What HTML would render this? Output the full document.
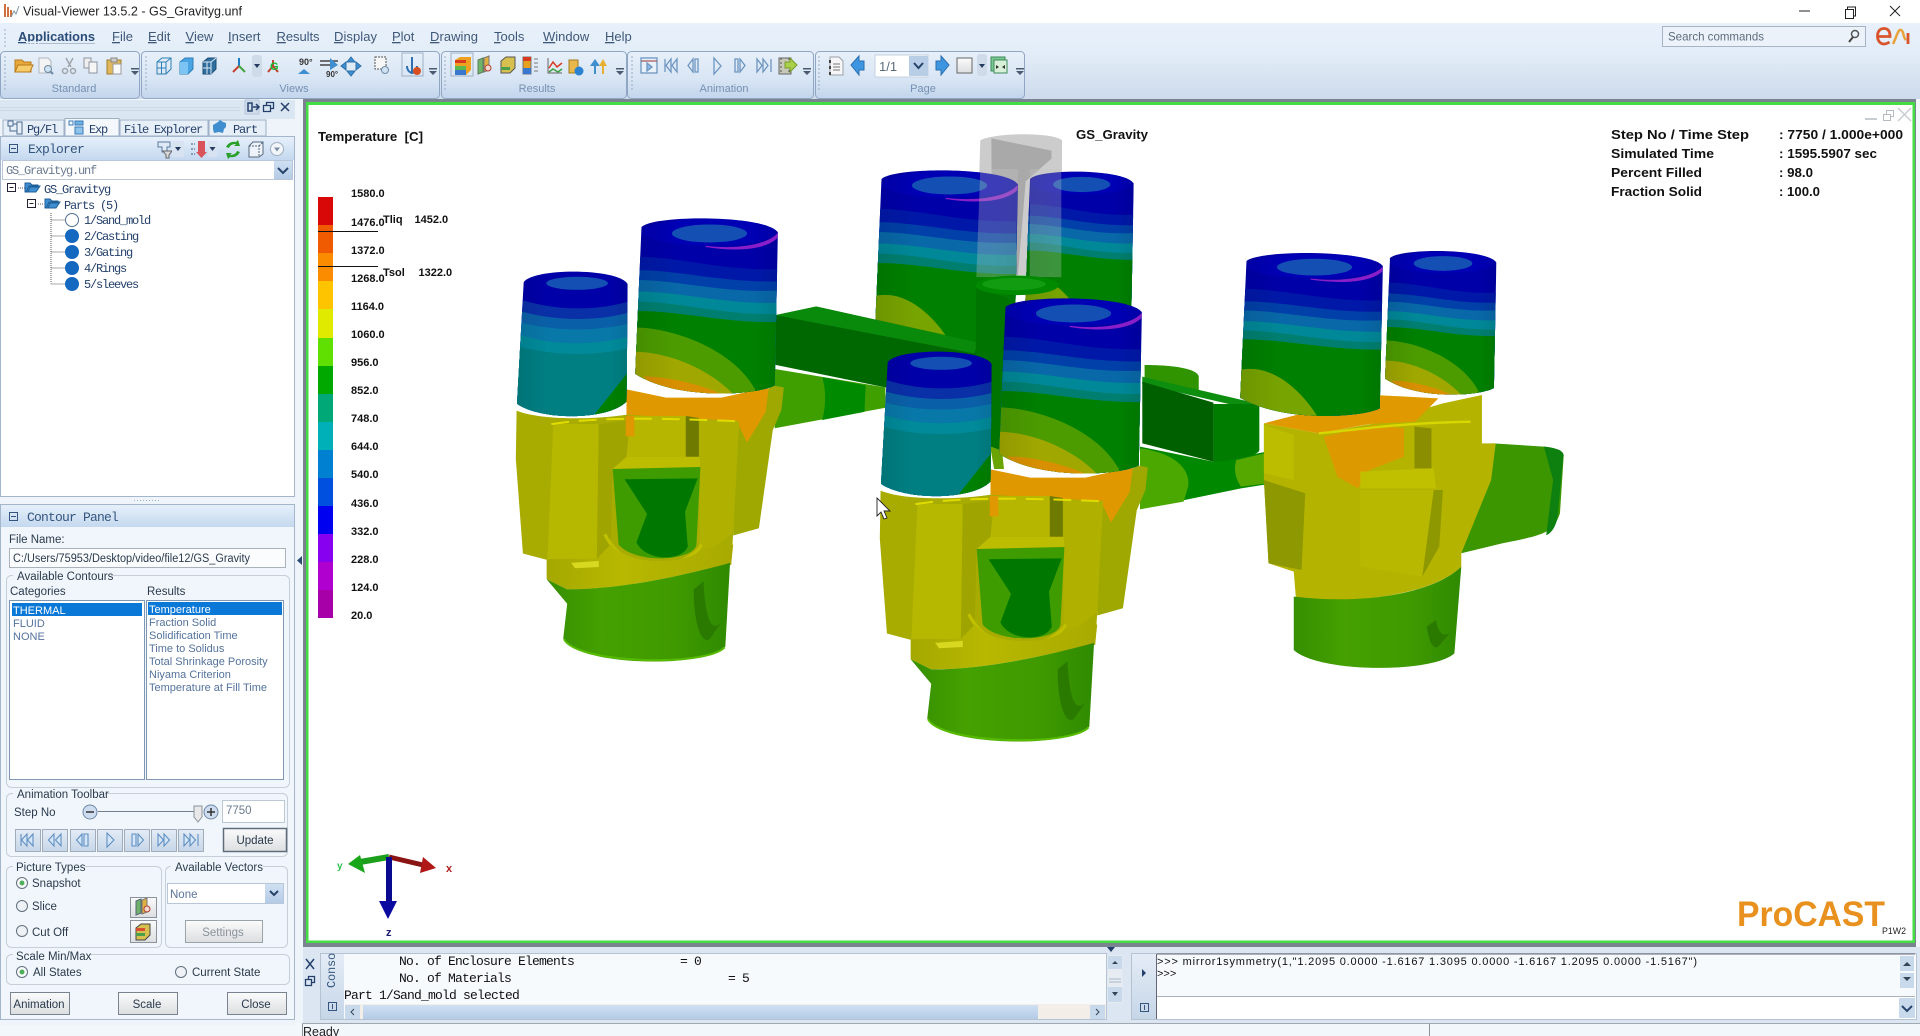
<!DOCTYPE html>
<html><head><meta charset="utf-8"><title>Visual-Viewer 13.5.2 - GS_Gravityg.unf</title>
<style>
html,body{margin:0;padding:0;background:#fff;width:1920px;height:1036px;overflow:hidden}
svg{display:block;position:absolute;left:0;top:0}
text{font-family:"Liberation Sans",sans-serif;white-space:pre}
.m{font-size:13px;fill:#3f5878}
.tl{font-size:11px;fill:#7590b2;text-anchor:middle}
.c{font-family:"Liberation Mono",monospace;font-size:12px;letter-spacing:-1.2px;fill:#24406a}
.h{font-family:"Liberation Mono",monospace;font-size:13px;letter-spacing:-.8px;fill:#34567e}
.con{font-family:"Liberation Mono",monospace;font-size:13px;letter-spacing:-.8px;fill:#111}
.u{font-size:11.5px;fill:#2a3a4c}
.li{font-size:11px;fill:#54739c}
.b{font-size:11px;font-weight:bold;fill:#111}
.o{font-size:12.5px;font-weight:bold;fill:#111}
</style></head><body>
<svg width="1920" height="1036" viewBox="0 0 1920 1036" xmlns="http://www.w3.org/2000/svg">
<defs>
<linearGradient id="bar" x1="0" y1="0" x2="0" y2="1"><stop offset="0" stop-color="#e8f1fb"/><stop offset=".4" stop-color="#e3edf8"/><stop offset="1" stop-color="#ccdaeb"/></linearGradient>
<linearGradient id="tp" x1="0" y1="0" x2="0" y2="1"><stop offset="0" stop-color="#e7f0fa"/><stop offset=".6" stop-color="#d8e5f4"/><stop offset="1" stop-color="#c2d5ec"/></linearGradient>
<linearGradient id="hd" x1="0" y1="0" x2="0" y2="1"><stop offset="0" stop-color="#e6f0fa"/><stop offset="1" stop-color="#c4d8ef"/></linearGradient>
<linearGradient id="btn" x1="0" y1="0" x2="0" y2="1"><stop offset="0" stop-color="#fbfbfb"/><stop offset="1" stop-color="#dcdee0"/></linearGradient>
<linearGradient id="ab" x1="0" y1="0" x2="0" y2="1"><stop offset="0" stop-color="#e4ecf6"/><stop offset="1" stop-color="#c6d6e8"/></linearGradient>
<linearGradient id="cb" x1="0" y1="0" x2="0" y2="1"><stop offset="0" stop-color="#cfe0f3"/><stop offset="1" stop-color="#b4cbe6"/></linearGradient>
<linearGradient id="cyl" x1="0" y1="0" x2="1" y2="0"><stop offset="0" stop-color="#000" stop-opacity=".1"/><stop offset=".3" stop-color="#000" stop-opacity="0"/><stop offset=".8" stop-color="#000" stop-opacity="0"/><stop offset="1" stop-color="#000" stop-opacity=".1"/></linearGradient>
<linearGradient id="grn" x1="0" y1="0" x2="1" y2="0"><stop offset="0" stop-color="#358f00"/><stop offset=".3" stop-color="#45a000"/><stop offset=".7" stop-color="#3f9a00"/><stop offset="1" stop-color="#2f8a00"/></linearGradient>
<linearGradient id="yel" x1="0" y1="0" x2="1" y2="0"><stop offset="0" stop-color="#a4a800"/><stop offset=".4" stop-color="#b8b800"/><stop offset="1" stop-color="#a8aa00"/></linearGradient>
<clipPath id="cL"><path d="M358,262C390,232 670,232 703,275L695,650C650,674 450,688 342,622Z"/></clipPath>
<clipPath id="cS"><path d="M60,397C85,362 300,362 323,402L320,690C270,738 100,735 43,695Z"/></clipPath>

<path id="PA" d="M520,308C600,318 680,305 703,276L701,290C670,318 600,323 520,311Z" fill="#8a1ec8"/>

<g id="RB">
<rect x="330" y="220" width="390" height="480" fill="#0000a8"/>
<ellipse cx="530" cy="275" rx="170" ry="32" fill="#0000b4"/>
<ellipse cx="530" cy="278" rx="95" ry="22" fill="#1450b4"/>
<path d="M330,335C450,332 560,372 710,365V700H330Z" fill="#0018a8"/>
<path d="M330,368C450,365 560,400 710,395V700H330Z" fill="#0040a8"/>
<path d="M330,392C450,390 560,425 710,418V700H330Z" fill="#0868a8"/>
<path d="M330,420C450,418 560,452 710,448V700H330Z" fill="#008898"/>
<path d="M330,445C450,442 560,480 710,475V700H330Z" fill="#007f70"/>
<path d="M330,468C450,465 560,498 710,495V700H330Z" fill="#008000"/>
</g>

<g id="RL"><g clip-path="url(#cL)">
<use href="#RB"/>
<path d="M330,508C430,505 590,560 645,660L650,700H330Z" fill="#4c9c00"/>
<path d="M330,568C420,565 530,610 590,672V700H330Z" fill="#a0a800"/>
<path d="M362,628C430,628 520,652 562,672L540,690L400,665Z" fill="#d89000"/>
<rect x="330" y="220" width="390" height="480" fill="url(#cyl)"/>
</g></g>

<g id="RL2"><g clip-path="url(#cL)">
<use href="#RB"/>
<path d="M340,549C420,530 500,600 548,690V700H340Z" fill="#78a400"/>
<rect x="330" y="220" width="390" height="480" fill="url(#cyl)"/>
</g></g>

<g id="RS"><g clip-path="url(#cS)">
<rect x="30" y="360" width="310" height="380" fill="#0000a8"/>
<ellipse cx="195" cy="400" rx="78" ry="16" fill="#1450b4"/>
<path d="M30,432C130,470 250,470 340,440V740H30Z" fill="#0a30a8"/>
<path d="M30,462C130,495 250,495 340,468V740H30Z" fill="#0a60a8"/>
<path d="M30,490C130,520 250,520 340,495V740H30Z" fill="#0878a8"/>
<path d="M30,520C130,555 250,555 340,525V740H30Z" fill="#008a9a"/>
<path d="M30,550C130,580 250,580 340,555V740H30Z" fill="#007f82"/>
<path d="M322,620L232,730H340V620Z" fill="#008000"/>
<rect x="30" y="360" width="310" height="380" fill="url(#cyl)"/>
</g></g>

<g id="U"><g transform="translate(500,120) scale(.3953,.4082)">
<path d="M600,720L690,650L718,655L712,710L690,760L655,1000L590,1018L590,760Z" fill="#9ea800"/>
<path d="M320,660L420,680L560,680L680,655L672,715L625,790L600,740L320,725Z" fill="#e09800"/>
<path d="M42,712C100,735 230,735 320,722L605,738L590,1010L585,1090L120,1078L58,1062L40,830Z" fill="#a8ac00"/>
<path d="M135,745L250,745L245,1075L120,1075Z" fill="#b6b800"/>
<path d="M250,745L330,735L320,830L285,855L280,1040L245,1075Z" fill="#a0a400"/>
<path d="M505,735L605,738L590,1010L505,1075Z" fill="#b0b000"/>
<path d="M330,725L470,725L470,825L320,825Z" fill="#b6b600"/>
<path d="M470,725L503,730L503,835L470,825Z" fill="#6f7a00"/>
<rect x="318" y="725" width="22" height="50" fill="#e09800"/>
<path d="M130,745C200,735 300,725 600,738" fill="none" stroke="#e0dc00" stroke-width="5" stroke-dasharray="45 25"/>
<path d="M320,825L505,825L507,850L285,855Z" fill="#bcbc00"/>
<path d="M285,855L507,850L497,1040C490,1082 340,1088 300,1040Z" fill="#3f9c00"/>
<path d="M315,880L500,878L468,960L475,1045C460,1082 370,1082 345,1035L372,965Z" fill="#007800"/>
<path d="M265,1015C290,1060 320,1085 400,1090C460,1090 500,1060 510,1040" fill="none" stroke="#c0c000" stroke-width="8"/>
<path d="M118,1078L118,1125L170,1150C300,1150 450,1120 585,1085L590,1040L510,1050C480,1090 330,1095 280,1040L245,1075Z" fill="url(#yel)"/>
<path d="M180,1085L250,1080L250,1095L190,1098Z" fill="#d8d820"/>
<path d="M118,1125L170,1185L160,1270C190,1338 520,1345 570,1290L582,1085C450,1120 300,1150 170,1150Z" fill="url(#grn)"/>
<path d="M490,1150C490,1220 505,1285 530,1272L560,1232C540,1250 520,1240 515,1130Z" fill="#2a7a00"/>
<path d="M162,1272C195,1332 520,1340 568,1292" fill="none" stroke="#56bb00" stroke-width="5"/>
</g>
<g transform="translate(500,120) scale(.3953,.4082)"><use href="#RL"/><use href="#PA"/><use href="#RS"/></g></g>
</defs>

<rect width="1920" height="1036" fill="#f2f7fb"/>
<rect width="1920" height="23" fill="#fff"/>
<rect y="23" width="1920" height="76" fill="url(#bar)"/>

<!-- title bar -->
<path d="M5,4V17M8,7V17M11,10V17" stroke="#d0703c" stroke-width="2"/><path d="M11,17L14,11L16,14L19,6" fill="none" stroke="#7e96aa"/>
<text x="23" y="15.500" font-size="13" fill="#222" textLength="219" lengthAdjust="spacingAndGlyphs">Visual-Viewer 13.5.2 - GS_Gravityg.unf</text>
<path d="M1799,11H1810" stroke="#222"/>
<path d="M1845.500,9.500h8v9h-8zM1847.500,9.500v-2.500h8v9h-2" fill="none" stroke="#222"/>
<path d="M1890,6L1900,16M1900,6L1890,16" stroke="#222"/>

<!-- menu -->
<path d="M5,29v18" stroke="#9fb0c4" stroke-dasharray="2 2"/>
<text x="18" y="41" font-size="13" font-weight="bold" fill="#2b4c78" textLength="77" lengthAdjust="spacingAndGlyphs" text-decoration="underline">Applications</text>
<rect x="26" y="41.500" width="69" height="1.500" fill="#e4edf8"/>
<text class="m" x="112" y="41"><tspan text-decoration="underline">F</tspan>ile</text>
<text class="m" x="148" y="41"><tspan text-decoration="underline">E</tspan>dit</text>
<text class="m" x="185.500" y="41"><tspan text-decoration="underline">V</tspan>iew</text>
<text class="m" x="228" y="41"><tspan text-decoration="underline">I</tspan>nsert</text>
<text class="m" x="276.500" y="41" textLength="43"><tspan text-decoration="underline">R</tspan>esults</text>
<text class="m" x="334" y="41" textLength="43"><tspan text-decoration="underline">D</tspan>isplay</text>
<text class="m" x="392" y="41"><tspan text-decoration="underline">P</tspan>lot</text>
<text class="m" x="430" y="41" textLength="48"><tspan text-decoration="underline">D</tspan>rawing</text>
<text class="m" x="494" y="41"><tspan text-decoration="underline">T</tspan>ools</text>
<text class="m" x="543" y="41"><tspan text-decoration="underline">W</tspan>indow</text>
<text class="m" x="605" y="41"><tspan text-decoration="underline">H</tspan>elp</text>
<!-- search -->
<rect x="1662.500" y="26.500" width="203" height="20" fill="#ecf2f9" stroke="#a7b3c2"/>
<text x="1668" y="40.500" font-size="12" fill="#5d6c7e" textLength="96" lengthAdjust="spacingAndGlyphs">Search commands</text>
<circle cx="1855" cy="34" r="3.500" fill="none" stroke="#555" stroke-width="1.500"/><path d="M1853,37L1849,42" stroke="#444" stroke-width="2"/>
<path d="M1878,36.500h12c0,-6 -2.500,-8 -6,-8c-4,0 -6.500,3 -6.500,7.500c0,5 3,8 6.500,8c2.500,0 4,-1 5.500,-2" fill="none" stroke="#d9542c" stroke-width="2.800"/>
<path d="M1893,44C1897,36 1898,29 1901,30C1904,31 1903,38 1906,40" fill="none" stroke="#e8a23c" stroke-width="2.500"/>
<path d="M1908,33V44" stroke="#d9542c" stroke-width="2.800"/>

<!-- toolbar panels -->
<g fill="url(#tp)" stroke="#90a6c2">
<rect x=".5" y="51.500" width="139" height="47" rx="4"/>
<rect x="141.500" y="51.500" width="298" height="47" rx="4"/>
<rect x="441.500" y="51.500" width="185" height="47" rx="4"/>
<rect x="627.500" y="51.500" width="186" height="47" rx="4"/>
<rect x="815.500" y="51.500" width="209" height="47" rx="4"/>
</g>
<g stroke="#9cadc2" stroke-dasharray="2 2">
<path d="M5,56V92M146,56V92M445,56V92M632,56V92M819,56V92"/></g>
<text class="tl" x="74" y="92">Standard</text><text class="tl" x="294" y="92">Views</text><text class="tl" x="537" y="92">Results</text><text class="tl" x="724" y="92">Animation</text><text class="tl" x="923" y="92">Page</text>
<g fill="#4a5a70"><path d="M131,68h8v1.500h-8zM131,71h8l-4,4z"/><path d="M429,68h8v1.500h-8zM429,71h8l-4,4z"/><path d="M616,68h8v1.500h-8zM616,71h8l-4,4z"/><path d="M803,68h8v1.500h-8zM803,71h8l-4,4z"/><path d="M1016,68h8v1.500h-8zM1016,71h8l-4,4z"/></g>
<!-- standard icons -->
<path d="M15,60h7l2,2h7v10H15z" fill="#e8a83c" stroke="#b97a1c"/><path d="M15,72l3,-7h15l-3,7z" fill="#f6cb6a" stroke="#b97a1c"/>
<path d="M39,58h9l3,3v12H39z" fill="#f3f3f3" stroke="#b0b8c0"/><circle cx="48" cy="69" r="3.500" fill="#cfe2f2" stroke="#6f8ba6"/><path d="M50,71l3,3" stroke="#6f8ba6" stroke-width="2"/>
<path d="M66,58l5,9M73,58l-5,9" stroke="#a0a4aa" stroke-width="1.500"/><circle cx="65" cy="71" r="2.500" fill="none" stroke="#a0a4aa" stroke-width="1.500"/><circle cx="73" cy="71" r="2.500" fill="none" stroke="#a0a4aa" stroke-width="1.500"/>
<path d="M84,58h7v10h-7z" fill="#eee" stroke="#8d959e"/><path d="M89,62h8v11h-8z" fill="#f6f6f6" stroke="#8d959e"/>
<path d="M107,60h14v14h-14z" fill="#e2b85c" stroke="#9f7e2e"/><rect x="111" y="58" width="6" height="4" fill="#ccc" stroke="#888"/><path d="M113,64h8v10h-8z" fill="#fafafa" stroke="#9a9a9a"/>
<!-- views icons -->
<g fill="none" stroke="#2d7fb5"><path d="M157,62l5,-4h9v11l-5,5h-9zM157,62h9v12M166,62l5,-4M161.500,62v12M157,68h9"/></g>
<path d="M180,62l5,-4h8v11l-5,5h-8z" fill="#4aa3e2" stroke="#2d7fb5"/><path d="M180,62h8v12h-8z" fill="#7cc4f4"/>
<g fill="#2f6f9f" stroke="#1d4d74"><path d="M203,62l5,-4h8v11l-5,5h-8z"/></g><path d="M203,62h8v12M207,62v12M203,68h8M211,62l5,-4" fill="none" stroke="#dfeaf4"/>
<path d="M239,66V58" stroke="#1f7ac4" stroke-width="2"/><path d="M239,66l-6,6" stroke="#c64030" stroke-width="2"/><path d="M239,66l6,6" stroke="#43a43d" stroke-width="2"/>
<rect x="252" y="55" width="10" height="22" rx="3" fill="#cfdbe8"/><path d="M254,64h6l-3,4z" fill="#223a5e"/>
<path d="M273,66V60M273,66l-5,6M273,66l5,6" stroke="#c64030" stroke-width="2"/><text x="270" y="70" font-size="11" font-weight="bold" fill="#1b3" >G</text>
<text x="299" y="65" font-size="9" font-weight="bold" fill="#333">90°</text><path d="M298,74l6,-5l6,5z" fill="#3f8fd0"/>
<path d="M320,61h18M320,65h14" stroke="#444" stroke-width="1.500"/><path d="M330,58l8,7l-8,5z" fill="#3f8fd0"/><text x="326" y="77" font-size="8" font-weight="bold" fill="#333">90°</text>
<path d="M351,57l4,5h-8zM351,76l4,-5h-8zM341,66l5,-4v8zM361,66l-5,-4v8z" fill="#3f8fd0" stroke="#2a6fa8"/>
<rect x="375" y="57" width="11" height="12" fill="#f6f6f6" stroke="#555" stroke-dasharray="2 1"/><circle cx="385" cy="70" r="3.500" fill="#cfe2f2" stroke="#6f8ba6"/>
<rect x="402" y="53" width="21" height="23" fill="none" stroke="#a0b0c4"/>
<path d="M412,57v16M407,66c0,6 5,7 5,7s5,-1 5,-7" fill="none" stroke="#2d6fb0" stroke-width="2"/><circle cx="417" cy="71" r="4" fill="#d8501f"/>
<!-- results icons -->
<rect x="451" y="53" width="22" height="23" fill="none" stroke="#a0b0c4"/>
<path d="M455,60l5,-3h11v13l-5,5h-11z" fill="#f0a020"/><path d="M455,66h11v4h-11z" fill="#5ab84c"/><path d="M455,70h11v5h-11z" fill="#3a78d0"/><path d="M455,60h11v3h-11z" fill="#d83a20"/>
<path d="M478,60l5,-2v14l-5,2z" fill="#6fb26a" stroke="#5e7e5e"/><path d="M484,58l5,-2v14l-5,2z" fill="#e0b040" stroke="#777"/><circle cx="488" cy="68" r="3" fill="#f6d8d0" stroke="#b04030"/>
<path d="M501,61l5,-4h9v11l-5,5h-9z" fill="#d8c050" stroke="#555"/><path d="M501,67h9v3h-9z" fill="#4aa04a"/>
<rect x="523" y="57" width="8" height="17" fill="#e8a020" stroke="#777"/><rect x="523" y="57" width="8" height="4" fill="#d83a20"/><rect x="523" y="68" width="8" height="6" fill="#3a78d0"/><path d="M534,59h4M534,63h4M534,67h4M534,71h4" stroke="#777"/>
<path d="M548,58v15h14" fill="none" stroke="#666"/><path d="M549,68l4,-6l4,5l5,-4" fill="none" stroke="#d83a20" stroke-width="1.500"/><path d="M549,72l4,-3l5,3l4,-3" fill="none" stroke="#3fa040" stroke-width="1.500"/>
<path d="M569,60h9v13h-9z" fill="#e8b84c" stroke="#a07c20"/><circle cx="579" cy="71" r="4.500" fill="#2a82d0"/>
<path d="M594,74v-8l-4,0l5,-7l5,7h-4v8z" fill="#3f8fd0"/><path d="M602,74v-8h-3l4,-7l4,7h-3v8z" fill="#e8b030"/>
<!-- animation icons -->
<g fill="none" stroke="#6d95c0" stroke-width="1.300">
<rect x="641" y="58" width="16" height="15" fill="#e8f1fa"/><path d="M641,61h16" stroke="#a86060"/><path d="M647,63l5,4l-5,4z" fill="#8fbbe8"/>
<path d="M665,59v13M677,59l-5,6.500l5,6.500zM671,59l-5,6.500l5,6.500z"/>
<path d="M693,59l-5,6.500l5,6.500zM695,59v13h3v-13z"/>
<path d="M714,58l7,8l-7,8z"/>
<path d="M735,59h3v13h-3zM740,59l5,6.500l-5,6.500z"/>
<path d="M757,59l5,6.500l-5,6.500zM763,59l5,6.500l-5,6.500zM771,59v13"/>
</g>
<rect x="779" y="58" width="12" height="16" fill="#c8c8b8" stroke="#666"/><path d="M781,58v16M789,58v16" stroke="#555" stroke-dasharray="2 2"/><path d="M785,62h5v-4l7,7l-7,7v-4h-5z" fill="#a8d048" stroke="#7a9a30"/>
<!-- page icons -->
<path d="M830,57h9l4,4v14h-13z" fill="#f6f6f6" stroke="#9aa2aa"/><path d="M833,64h7M833,67h7M833,70h7" stroke="#777"/><path d="M830,60v3M830,66v3M830,72v3" stroke="#444" stroke-width="2"/>
<path d="M851,65l8,-9v5h5v9h-5v5z" fill="#3f96e0" stroke="#2a6fb0"/>
<rect x="875" y="55" width="53" height="22" fill="#fff" stroke="#c5d2e2"/><rect x="909" y="56" width="19" height="20" fill="#b8cde6"/>
<text x="879" y="71" font-size="13" fill="#5a6a80">1/1</text><path d="M914,63l4.500,5l4.500,-5" fill="none" stroke="#27436b" stroke-width="2"/>
<path d="M949,65l-8,-9v5h-5v9h5v5z" fill="#3f96e0" stroke="#2a6fb0"/>
<rect x="957" y="58" width="15" height="15" fill="url(#btn)" stroke="#666"/>
<rect x="977" y="54" width="10" height="22" rx="3" fill="#cfdbe8"/><path d="M979,64h6l-3,4z" fill="#223a5e"/>
<rect x="991" y="57" width="14" height="14" fill="#7ac890" stroke="#3c8a5c"/><rect x="994" y="60" width="13" height="13" fill="#d8f0d8" stroke="#3c8a5c"/><path d="M996,65l3,2l-3,2zM1005,65l-3,2l3,2z" fill="#333"/>

<!-- left panel -->
<rect x="0" y="100" width="303" height="925" fill="#eff4fb"/>
<rect x="0" y="100" width="295" height="19" fill="#dbe6f3"/>
<path d="M0,107.500H240M0,110.500H240" stroke="#ccd8e6"/>
<rect x="245" y="100" width="14" height="14" fill="#cfdcec" stroke="#b4c4d8"/><path d="M248,103v8h4v-8zM253,107h5m-2,-3l3,3l-3,3" fill="none" stroke="#24406a" stroke-width="1.500"/>
<path d="M263.500,105.500h7v6h-7zM266.500,105.500v-3h7v6h-3" fill="none" stroke="#24406a" stroke-width="1.300"/>
<path d="M281,103L289,111M289,103L281,111" stroke="#24406a" stroke-width="1.500"/>
<!-- tabs -->
<path d="M3,136V120h61v16z" fill="#e6eef8" stroke="#9eb0c6"/>
<path d="M65,136V118.500h54V136z" fill="#f4f8fd" stroke="#9eb0c6"/>
<path d="M120,136V120h88v16z" fill="#e6eef8" stroke="#9eb0c6"/>
<path d="M209,136V120h57v16z" fill="#e6eef8" stroke="#9eb0c6"/>
<g fill="none" stroke="#4a6a90"><rect x="8" y="121" width="5" height="5"/><rect x="17" y="122" width="5" height="12"/><path d="M13,124h4M10,126v5h7"/></g>
<g fill="none" stroke="#3a7ab8"><rect x="69" y="121" width="4" height="4"/><rect x="75" y="121" width="8" height="4" fill="#6fb0e0"/><rect x="75" y="127" width="8" height="7" fill="#8fc4ec"/></g>
<path d="M213,125l5,-3l2,-2l3,2l3,1l0,4l-2,2l-1,4l-4,-1l-5,1l-1,-4z" fill="#3f8fd0"/>
<text class="c" x="27" y="133">Pg/Fl</text><text class="c" x="89" y="133">Exp</text><text class="c" x="124" y="133">File Explorer</text><text class="c" x="233" y="133">Part</text>
<!-- explorer panel -->
<rect x=".5" y="136.500" width="294" height="360" fill="#fff" stroke="#a4b6cc"/>
<rect x="1" y="137" width="293" height="23" fill="url(#hd)"/>
<rect x="9.500" y="144.500" width="8" height="8" fill="none" stroke="#34567e"/><path d="M11,148.500h5" stroke="#34567e"/>
<text class="h" x="28" y="153">Explorer</text>
<path d="M158,142h12v5h-3v5h-5v-5h-4z" fill="#e0eaf6" stroke="#5a7a9e"/><path d="M163,151h9l-3,4v3h-3v-3z" fill="#d8d8d8" stroke="#666"/>
<rect x="172" y="141" width="12" height="16" fill="#d7e3f1"/><path d="M175,147h6l-3,4z" fill="#223a5e"/>
<path d="M191,144h4M191,149h4M191,154h4" stroke="#3a5a80" stroke-dasharray="2 1"/><rect x="198" y="141" width="7" height="12" fill="#d8545a"/><path d="M196,152h11l-5.500,6z" fill="#d8545a"/>
<rect x="208" y="141" width="9" height="16" fill="#d7e3f1"/><path d="M209.500,147h6l-3,4z" fill="#223a5e"/>
<path d="M226,147c2,-4 6,-6 10,-5l2,-2l2,6h-6l2,-2c-3,0 -6,1 -7,4z" fill="#2aa02a"/><path d="M240,152c-2,4 -6,6 -10,5l-2,2l-2,-6h6l-2,2c3,0 6,-1 7,-4z" fill="#2aa02a"/>
<path d="M249,146l4,-4h10v12l-4,3h-10z" fill="#eef3f9" stroke="#56687e"/><path d="M249,146h10v11M259,146l4,-4" fill="none" stroke="#56687e" stroke-dasharray="2 1"/>
<circle cx="277" cy="149" r="6.500" fill="#f2f6fb" stroke="#a0b0c2"/><path d="M274,147.500h6l-3,4z" fill="#7a8ea6"/>
<rect x="2.500" y="160.500" width="290" height="19" fill="#fff" stroke="#b8c6d8"/>
<text class="c" x="6" y="174" style="fill:#6a7a90">GS_Gravityg.unf</text>
<rect x="274" y="161" width="18" height="18" fill="url(#cb)"/><path d="M278,168l5,5l5,-5" fill="none" stroke="#27436b" stroke-width="2"/>
<!-- tree -->
<g stroke="#555" stroke-dasharray="1 1"><path d="M18,188H25M38,204H44M51,213V283.500M51.500,220H65M51.500,236H65M51.500,252H65M51.500,268H65M51.500,284H65"/></g>
<g fill="#fff" stroke="#223"><rect x="7.500" y="183.500" width="8" height="8"/><rect x="27.500" y="199.500" width="8" height="8"/></g>
<path d="M9.500,187.500h4M29.500,203.500h4" stroke="#223"/>
<g fill="#3f8fd0" stroke="#1f5f98"><path d="M25,192v-9h5l2,2h6v2h-8l-2,5zM26,192l3,-6h11l-4,6z"/><path d="M45,208v-9h5l2,2h6v2h-8l-2,5zM46,208l3,-6h11l-4,6z"/></g>
<text class="c" x="44" y="193">GS_Gravityg</text>
<text class="c" x="64" y="209">Parts (5)</text>
<circle cx="72" cy="220" r="6.500" fill="#fff" stroke="#52708e"/>
<g fill="#1468c0"><circle cx="72" cy="236" r="7"/><circle cx="72" cy="252" r="7"/><circle cx="72" cy="268" r="7"/><circle cx="72" cy="284" r="7"/></g>
<text class="c" x="84" y="224">1/Sand_mold</text><text class="c" x="84" y="240">2/Casting</text><text class="c" x="84" y="256">3/Gating</text><text class="c" x="84" y="272">4/Rings</text><text class="c" x="84" y="288">5/sleeves</text>
<path d="M134,500.500h26" stroke="#a4b4c8" stroke-dasharray="1 2"/>
<!-- contour panel -->
<rect x=".5" y="504.500" width="294" height="515" fill="#f1f6fc" stroke="#a4b6cc"/>
<rect x="1" y="505" width="293" height="22" fill="url(#hd)"/>
<rect x="9.500" y="512.500" width="8" height="8" fill="none" stroke="#34567e"/><path d="M11,516.500h5" stroke="#34567e"/>
<text class="h" x="27" y="521">Contour Panel</text>
<path d="M302,556v9l-5,-4.500z" fill="#2a4a72"/>
<text class="u" x="9" y="543">File Name:</text>
<rect x="9.500" y="548.500" width="276" height="19" fill="#fafcfe" stroke="#aab2bc"/>
<text x="13" y="562" font-size="11.500" fill="#2a3a4c" textLength="237" lengthAdjust="spacingAndGlyphs">C:/Users/75953/Desktop/video/file12/GS_Gravity</text>
<g fill="none" stroke="#c6ced8">
<rect x="6.500" y="575.500" width="283" height="212" rx="5"/>
<rect x="6.500" y="793.500" width="281" height="63" rx="5"/>
<rect x="6.500" y="866.500" width="155" height="81" rx="5"/>
<rect x="165.500" y="866.500" width="122" height="81" rx="5"/>
<rect x="6.500" y="954.500" width="283" height="30" rx="5"/></g>
<g fill="#f1f6fc"><rect x="13" y="570" width="98" height="10"/><rect x="13" y="788" width="92" height="10"/><rect x="13" y="861" width="72" height="10"/><rect x="171" y="861" width="92" height="10"/><rect x="13" y="949" width="77" height="10"/></g>
<text class="u" x="17" y="580">Available Contours</text>
<text class="u" x="10" y="595">Categories</text><text class="u" x="147" y="595">Results</text>
<rect x="9.500" y="600.500" width="135" height="179" fill="#fff" stroke="#7e98b4"/>
<rect x="146.500" y="600.500" width="137" height="179" fill="#fff" stroke="#7e98b4"/>
<rect x="12" y="603" width="130" height="13" fill="#0a78d7"/><rect x="148" y="602" width="134" height="13" fill="#0a78d7"/>
<text class="li" x="13" y="614" style="fill:#fff">THERMAL</text><text class="li" x="13" y="627">FLUID</text><text class="li" x="13" y="640">NONE</text>
<text class="li" x="149" y="613" style="fill:#fff">Temperature</text><text class="li" x="149" y="626">Fraction Solid</text><text class="li" x="149" y="639">Solidification Time</text><text class="li" x="149" y="652">Time to Solidus</text><text class="li" x="149" y="665">Total Shrinkage Porosity</text><text class="li" x="149" y="678">Niyama Criterion</text><text class="li" x="149" y="691">Temperature at Fill Time</text>
<!-- animation toolbar -->
<text class="u" x="17" y="798">Animation Toolbar</text>
<text class="u" x="14" y="816">Step No</text>
<circle cx="90" cy="812" r="7" fill="#cddcef" stroke="#6f88a6"/><path d="M86,812h8" stroke="#333" stroke-width="1.500"/>
<path d="M98,811.500H196" stroke="#76808c"/><path d="M194,806h8v11l-4,5l-4,-5z" fill="#e8e8e8" stroke="#8a929c"/>
<circle cx="211" cy="812" r="7" fill="#cddcef" stroke="#6f88a6"/><path d="M207,812h8M211,808v8" stroke="#333" stroke-width="1.500"/>
<rect x="222.500" y="800.500" width="62" height="22" fill="#fff" stroke="#bcc8d4"/>
<text x="226" y="814" font-size="11.500" fill="#6a7a8e">7750</text>
<g fill="url(#ab)" stroke="#a0acba"><rect x="15.500" y="829.500" width="25" height="22"/><rect x="42.500" y="829.500" width="25" height="22"/><rect x="70.500" y="829.500" width="25" height="22"/><rect x="97.500" y="829.500" width="25" height="22"/><rect x="124.500" y="829.500" width="25" height="22"/><rect x="151.500" y="829.500" width="25" height="22"/><rect x="178.500" y="829.500" width="25" height="22"/></g>
<g fill="#d5e6f8" stroke="#5f8fc2" stroke-width="1.100">
<path d="M21,834v12M33,834l-5.500,6l5.500,6zM27,834l-5.500,6l5.500,6z"/>
<path d="M54,834l-5.500,6l5.500,6zM61,834l-5.500,6l5.500,6z"/>
<path d="M82,834l-5.500,6l5.500,6zM84,834v12h4v-12z"/>
<path d="M107,833l7,7l-7,7z"/>
<path d="M132,834v12h4v-12zM138,834l5.500,6l-5.500,6z"/>
<path d="M158,834l5.500,6l-5.500,6zM164,834l5.500,6l-5.500,6z"/>
<path d="M184,834l5.500,6l-5.500,6zM190,834l5.500,6l-5.500,6zM198,834v12"/></g>
<rect x="223.500" y="828.500" width="63" height="23" fill="url(#btn)" stroke="#5e6c7c" stroke-width="1.500"/>
<text class="u" x="255" y="844" text-anchor="middle">Update</text>
<!-- picture types -->
<text class="u" x="16" y="871">Picture Types</text>
<text class="u" x="175" y="871">Available Vectors</text>
<circle cx="22" cy="883" r="5.500" fill="#f8fafc" stroke="#62707e"/><circle cx="22" cy="883" r="2.500" fill="#4fae5a"/>
<circle cx="22" cy="906" r="5.500" fill="#eef2f6" stroke="#62707e"/><circle cx="22" cy="931" r="5.500" fill="#eef2f6" stroke="#62707e"/>
<text class="u" x="32" y="887">Snapshot</text><text class="u" x="32" y="910">Slice</text><text class="u" x="32" y="936">Cut Off</text>
<rect x="130.500" y="897.500" width="26" height="20" fill="url(#btn)" stroke="#8a929c"/><rect x="130.500" y="920.500" width="26" height="22" fill="url(#btn)" stroke="#8a929c"/>
<path d="M136,901l5,-2v14l-5,2z" fill="#6fb26a" stroke="#567"/><path d="M142,900l5,-2v14l-5,2z" fill="#e0b040" stroke="#777"/><circle cx="147" cy="909" r="3" fill="#f6d8d0" stroke="#b04030"/>
<path d="M136,928l5,-4h9v11l-5,5h-9z" fill="#d8c050" stroke="#444"/><path d="M136,933h9v3h-9z" fill="#4aa04a"/><path d="M136,928h9v3h-9z" fill="#d85030"/>
<rect x="167.500" y="883.500" width="116" height="20" fill="#fff" stroke="#b8c6d8"/>
<text x="170" y="898" font-size="11.500" fill="#5a7498">None</text>
<rect x="265" y="884" width="18" height="19" fill="url(#cb)"/><path d="M270,891l4,4l4,-4" fill="none" stroke="#27436b" stroke-width="2"/>
<rect x="185.500" y="920.500" width="77" height="22" fill="url(#btn)" stroke="#9aa2aa"/><text class="u" x="223" y="936" text-anchor="middle" style="fill:#8a929c">Settings</text>
<text class="u" x="16" y="960">Scale Min/Max</text>
<circle cx="22" cy="972" r="5.500" fill="#f8fafc" stroke="#62707e"/><circle cx="22" cy="972" r="2.500" fill="#4fae5a"/>
<circle cx="181" cy="972" r="5.500" fill="#eef2f6" stroke="#62707e"/>
<text class="u" x="33" y="976">All States</text><text class="u" x="192" y="976">Current State</text>
<g fill="url(#btn)" stroke="#7a8490"><rect x="10.500" y="992.500" width="59" height="22"/><rect x="118.500" y="992.500" width="59" height="22"/><rect x="227.500" y="992.500" width="59" height="22"/></g>
<text class="u" x="39" y="1008" text-anchor="middle">Animation</text><text class="u" x="147" y="1008" text-anchor="middle">Scale</text><text class="u" x="256" y="1008" text-anchor="middle">Close</text>

<!-- viewport -->
<rect x="303" y="99" width="1613" height="848" fill="#7a8490"/>
<rect x="306" y="102" width="1609" height="841" fill="#44dd44"/>
<rect x="308.500" y="105" width="1604" height="835.500" fill="#fff"/>
<rect x="1865" y="118" width="12" height="2" fill="#c8cdd2"/><path d="M1883.500,114.500h7v6h-7zM1886.500,114.500v-4h7v6h-3" fill="none" stroke="#b4bbc2"/><path d="M1898,108L1911,121M1911,108L1898,121" stroke="#c8cdd2" stroke-width="1.500"/>

<text x="318" y="141" font-size="13" font-weight="bold" fill="#111" textLength="105" lengthAdjust="spacingAndGlyphs">Temperature  [C]</text>
<text x="1076" y="139" font-size="13" font-weight="bold" fill="#111" textLength="72" lengthAdjust="spacingAndGlyphs">GS_Gravity</text>
<text class="o" x="1611" y="139" textLength="138" lengthAdjust="spacingAndGlyphs">Step No / Time Step</text><text class="o" x="1779" y="139" textLength="124" lengthAdjust="spacingAndGlyphs">: 7750 / 1.000e+000</text>
<text class="o" x="1611" y="158" textLength="103" lengthAdjust="spacingAndGlyphs">Simulated Time</text><text class="o" x="1779" y="158" textLength="98" lengthAdjust="spacingAndGlyphs">: 1595.5907 sec</text>
<text class="o" x="1611" y="177" textLength="91" lengthAdjust="spacingAndGlyphs">Percent Filled</text><text class="o" x="1779" y="177" textLength="34" lengthAdjust="spacingAndGlyphs">: 98.0</text>
<text class="o" x="1611" y="196" textLength="91" lengthAdjust="spacingAndGlyphs">Fraction Solid</text><text class="o" x="1779" y="196" textLength="41" lengthAdjust="spacingAndGlyphs">: 100.0</text>

<!-- legend -->
<g>
<rect x="318" y="197" width="15" height="28" fill="#d90808"/><rect x="318" y="225" width="15" height="28" fill="#f05a00"/><rect x="318" y="253" width="15" height="28" fill="#fb8c00"/><rect x="318" y="281" width="15" height="28" fill="#ffc400"/><rect x="318" y="309" width="15" height="29" fill="#e0ea00"/><rect x="318" y="338" width="15" height="28" fill="#5fe000"/><rect x="318" y="366" width="15" height="28" fill="#00a800"/><rect x="318" y="394" width="15" height="28" fill="#00a878"/><rect x="318" y="422" width="15" height="28" fill="#00b0b8"/><rect x="318" y="450" width="15" height="28" fill="#0080d0"/><rect x="318" y="478" width="15" height="28" fill="#0050e0"/><rect x="318" y="506" width="15" height="28" fill="#0000f0"/><rect x="318" y="534" width="15" height="28" fill="#8800f0"/><rect x="318" y="562" width="15" height="28" fill="#b000d0"/><rect x="318" y="590" width="15" height="28" fill="#a800a8"/>
</g>
<path d="M318,231.500H378M318,266.500H378" stroke="#111"/>
<g class="b"><text class="b" x="351" y="197">1580.0</text><text class="b" x="351" y="226">1476.0</text><text class="b" x="351" y="254">1372.0</text><text class="b" x="351" y="282">1268.0</text><text class="b" x="351" y="310">1164.0</text><text class="b" x="351" y="338">1060.0</text><text class="b" x="351" y="366">956.0</text><text class="b" x="351" y="394">852.0</text><text class="b" x="351" y="422">748.0</text><text class="b" x="351" y="450">644.0</text><text class="b" x="351" y="478">540.0</text><text class="b" x="351" y="507">436.0</text><text class="b" x="351" y="535">332.0</text><text class="b" x="351" y="563">228.0</text><text class="b" x="351" y="591">124.0</text><text class="b" x="351" y="619">20.0</text>
<text class="b" x="383" y="223">Tliq</text><text class="b" x="414.500" y="223">1452.0</text><text class="b" x="383" y="276">Tsol</text><text class="b" x="418.500" y="276">1322.0</text></g>

<!-- 3D model -->
<g transform="translate(500,120) scale(.3953,.4082)">
<path d="M1215,50C1250,30 1400,30 1422,50L1420,380H1205Z" fill="#cccccc"/>
<path d="M1243,45L1395,75V95L1330,150L1310,380H1245Z" fill="#a9a9a9"/>
</g>
<g transform="translate(240,-48)"><g transform="translate(500,120) scale(.3953,.4082)"><use href="#RL2"/><use href="#PA"/></g></g>
<g transform="translate(542.500,-14) scale(.76,.85)"><g transform="translate(500,120) scale(.3953,.4082)"><use href="#RL2"/></g></g>
<g transform="translate(500,120) scale(.3953,.4082)">
<path d="M1215,120L1205,385H1305L1310,120Z" fill="#c8c8c8" opacity=".3"/>
<path d="M1340,120V385H1420V120Z" fill="#c8c8c8" opacity=".3"/>
<!-- left runner -->
<path d="M695,610L975,655V705L695,755Z" fill="#3f9f00"/>
<path d="M815,630L925,650L922,715L815,735C825,700 825,660 815,630Z" fill="#008a00"/>
<path d="M697,478L800,457L1210,545L1205,680L975,655L697,600Z" fill="#006800"/>
<path d="M697,478L800,457L1210,545L1200,572Z" fill="#0a8a0a"/>
<!-- sprue -->
<path d="M1205,405L1203,620L1240,800L1280,815L1290,440Z" fill="#007400"/>
<path d="M1240,800L1270,810L1275,855H1250Z" fill="#6aa400"/>
<ellipse cx="1308" cy="405" rx="105" ry="24" fill="#008a00"/><ellipse cx="1300" cy="402" rx="80" ry="15" fill="#129c12"/>
</g>
<!-- right side -->
<g transform="translate(860,280) scale(.459,.3333)">
<path d="M620,255C680,255 735,265 738,290V330L620,300Z" fill="#2f9400"/>
<path d="M610,500L770,545L945,500V600L830,625L610,688Z" fill="#008800"/>
<path d="M610,505C690,520 720,570 715,620L705,665L610,688Z" fill="#4aa800"/>
<path d="M820,540L945,500V600L830,620C815,590 815,560 820,540Z" fill="#55a800"/>
<path d="M615,290L870,372L860,390L615,312Z" fill="#0e8e0e"/>
<path d="M615,305L770,368V545L615,490Z" fill="#006000"/>
<path d="M770,372L870,372V510C870,530 790,545 770,545Z" fill="#007d00"/>
<!-- arm -->
<path d="M1380,490L1490,500C1520,505 1535,515 1533,530L1525,700C1510,760 1490,765 1400,790L1310,820V500Z" fill="#3c9600"/>
<path d="M1490,500C1530,505 1535,520 1532,530L1520,710C1515,750 1500,765 1495,765L1510,600Z" fill="#0d8010"/>
<!-- body -->
<path d="M880,430L1000,460L1120,430L1270,370L1355,345V490H1385L1375,600L1310,820V860C1250,940 1100,970 950,960L945,875L890,850L880,600Z" fill="#b4b400"/>
<path d="M880,600L970,640L962,870L890,850Z" fill="#8e9800"/>
<path d="M880,435L945,465V600L880,580Z" fill="#bcbc00"/>
<path d="M1120,345L1260,355L1210,425L1110,432L1000,460L880,430Z" fill="#e09a00"/>
<path d="M1010,470L1120,435L1185,445V530L1110,570L1085,625L1040,590Z" fill="#dd9a00"/>
<path d="M1090,575L1250,565L1255,625H1090Z" fill="#c0c000"/>
<path d="M1090,630L1250,630L1262,720L1225,890L1090,860Z" fill="#b8b800"/>
<path d="M1208,440L1245,445V565H1208Z" fill="#8a8e00"/>
<path d="M1000,460C1080,450 1160,430 1330,425" fill="none" stroke="#d8d800" stroke-width="7"/>
<path d="M1250,630L1270,630L1262,800L1225,890Z" fill="#8e9800"/>
<path d="M945,950C1100,975 1250,940 1310,860L1295,1120C1250,1180 1000,1180 945,1110Z" fill="url(#grn)"/>
<path d="M1235,1040C1240,1090 1250,1110 1260,1100L1285,1060C1270,1070 1260,1060 1255,1020Z" fill="#2a7a00"/>
</g>
<g transform="translate(605,50) scale(1,.93)"><g transform="translate(500,120) scale(.3953,.4082)"><use href="#RL2"/><use href="#PA"/></g></g>
<g transform="translate(889.600,72) scale(.78,.82)"><g transform="translate(500,120) scale(.3953,.4082)"><use href="#RL"/></g></g>
<use href="#U"/>
<g transform="translate(364,80)"><use href="#U"/></g>

<!-- cursor -->
<path d="M877,498V516L881,512L884,519L887,518L884,511H890Z" fill="#fff" stroke="#222" stroke-width=".9"/>

<!-- triad -->
<path d="M389,857L360,862" stroke="#1ca01c" stroke-width="6"/><path d="M348,864L360,855L365,873Z" fill="#19a619"/>
<path d="M389,857L423,865" stroke="#8a1414" stroke-width="5"/><path d="M436,868L423,857L420,873Z" fill="#b01818"/>
<path d="M389,857V902" stroke="#0a0a90" stroke-width="6"/><path d="M388,919L379,901H397Z" fill="#0a0aa0"/>
<text x="337" y="869" font-size="10" font-weight="bold" fill="#2cc04c">y</text>
<text x="446" y="872" font-size="11" font-weight="bold" fill="#b02020">x</text>
<text x="386" y="936" font-size="11" font-weight="bold" fill="#1a1a70">z</text>

<!-- ProCAST -->
<text x="1737" y="926" font-size="35" font-weight="bold" fill="#e8911e" textLength="148" lengthAdjust="spacingAndGlyphs">ProCAST</text>
<text x="1882" y="934" font-size="9" fill="#222" textLength="24" lengthAdjust="spacingAndGlyphs">P1W2</text>

<!-- console -->
<rect x="303" y="947" width="1617" height="76" fill="#dbe6f2"/>
<path d="M306,959L314,969M314,959L306,969" stroke="#24406a" stroke-width="1.500"/>
<path d="M305.500,979.500h6v6h-6zM308.500,979.500v-3h6v6h-3" fill="none" stroke="#24406a" stroke-width="1.300"/>
<rect x="320.500" y="953.500" width="786" height="66" fill="#f6fafd" stroke="#b4c2d2"/>
<rect x="321" y="954" width="23" height="65" fill="url(#ab)"/>
<text transform="translate(335,988) rotate(-90)" class="h" style="font-size:12px;letter-spacing:-.2px">Conso</text>
<rect x="328.500" y="1002.500" width="8" height="8" fill="none" stroke="#34567e"/><path d="M332.500,1004v5" stroke="#34567e"/>
<text class="con" x="399" y="965">No. of Enclosure Elements</text><text class="con" x="680" y="965">= 0</text>
<text class="con" x="399" y="982">No. of Materials</text><text class="con" x="728" y="982">= 5</text>
<text class="con" x="344" y="999">Part 1/Sand_mold selected</text>
<rect x="345" y="1004" width="761" height="15" fill="#f3eee8"/>
<rect x="345" y="1005" width="15" height="14" fill="#c8d9ec"/><path d="M354,1009l-3,3l3,3" fill="none" stroke="#345"/>
<rect x="363" y="1005" width="675" height="14" fill="url(#cb)"/>
<rect x="1090" y="1005" width="15" height="14" fill="#c8d9ec"/><path d="M1096,1009l3,3l-3,3" fill="none" stroke="#345"/>
<path d="M1107,947h8l-4,5z" fill="#24406a"/>
<rect x="1107.500" y="955" width="15" height="48" fill="#e6ecf2"/>
<rect x="1108" y="956" width="14" height="13" fill="#c8d9ec"/><path d="M1112,964l3,-3l3,3" fill="#345"/>
<rect x="1108" y="987" width="14" height="15" fill="#c8d9ec"/><path d="M1112,992l3,4l3,-4" fill="#345"/>
<path d="M1109,979h12M1109,982h12" stroke="#aab8c8"/>
<rect x="1131.500" y="953.500" width="785" height="66" fill="#fbfdff" stroke="#b4c2d2"/>
<rect x="1132" y="954" width="25" height="65" fill="url(#ab)"/>
<path d="M1142,969l4,4l-4,4z" fill="#24406a"/>
<rect x="1140.500" y="1003.500" width="8" height="8" fill="none" stroke="#34567e"/><path d="M1144.500,1005v5" stroke="#34567e"/>
<rect x="1157" y="954" width="758" height="42" fill="#f6fafd"/><path d="M1157,954H1915" stroke="#667" /><path d="M1157,996.500H1915" stroke="#a8b0ba"/><path d="M1156.500,954V1019" stroke="#667"/>
<rect x="1157" y="997" width="758" height="22" fill="#fff"/>
<text x="1157" y="965" font-family="Liberation Mono" font-size="11" fill="#111" textLength="540" lengthAdjust="spacing">&gt;&gt;&gt; mirror1symmetry(1,"1.2095 0.0000 -1.6167 1.3095 0.0000 -1.6167 1.2095 0.0000 -1.5167")</text>
<text x="1157" y="977" font-family="Liberation Mono" font-size="11" fill="#111">&gt;&gt;&gt;</text>
<rect x="1900" y="956" width="14" height="15" fill="#c8d9ec"/><path d="M1903,966l4,-4l4,4z" fill="#345"/>
<rect x="1900" y="973" width="14" height="15" fill="#c8d9ec"/><path d="M1903,977l4,4l4,-4z" fill="#345"/>
<rect x="1899" y="998" width="16" height="20" fill="#c8d9ec"/><path d="M1902,1006l5,5l5,-5" fill="none" stroke="#27436b" stroke-width="2"/>

<!-- status bar -->
<rect x="296" y="1023" width="1624" height="13" fill="#f2f7fb"/>
<path d="M302.500,1023.500H1920" stroke="#a0a8b0"/><path d="M302.500,1023.500V1036M1429.500,1023.500V1036" stroke="#8a929a"/>
<text x="303" y="1036" font-size="12.500" fill="#222">Ready</text>
</svg>
</body></html>
